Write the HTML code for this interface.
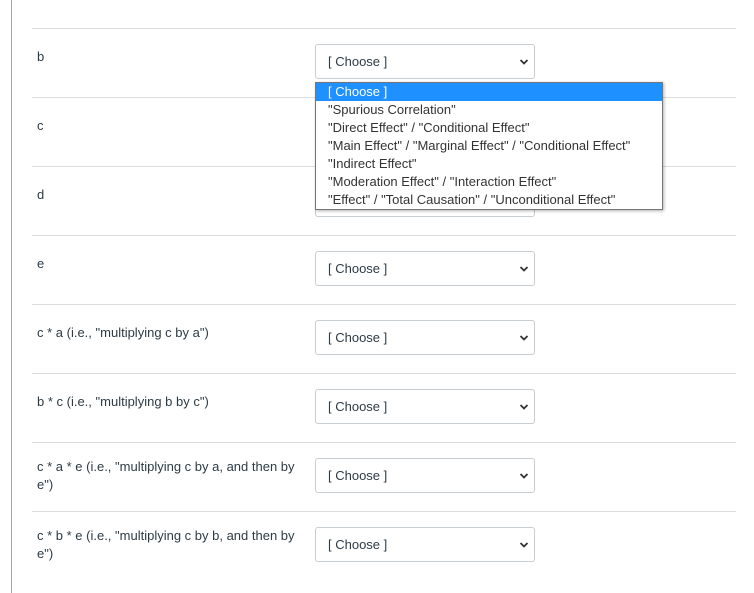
<!DOCTYPE html>
<html><head><style>
body{margin:0;width:754px;height:593px;background:#fff;position:relative;overflow:hidden;font-family:"Liberation Sans",sans-serif;color:#2d3b45}
.vl{position:absolute;left:11px;top:0;width:1px;height:593px;background:#a5a5a5}
.sep{position:absolute;left:32px;width:704px;height:1px;background:#dcdcdc}
.lab{position:absolute;left:37px;font-size:13px;line-height:18px;white-space:nowrap;top:0}
.sel{position:absolute;left:315px;width:220px;height:35px;border:1px solid #c7cdd1;border-radius:3px;box-sizing:border-box;background:#fff;font-size:13px;color:#2d3b45}
.sel span{position:absolute;left:12px;top:9px}
.sel svg{position:absolute;right:5px;top:13px}
.dd{position:absolute;left:315px;top:82px;width:348px;height:128px;border:1px solid #767676;box-sizing:border-box;background:#fff;box-shadow:1px 1px 3px rgba(0,0,0,.3);font-size:13px;color:#333}
.dd div{height:18px;line-height:18px;padding-left:12px;white-space:nowrap}
.dd .h{background:#1e90ff;color:#fff}
</style></head><body>
<div class="vl"></div>
<div class="sep" style="top:28px"></div>
<div class="sep" style="top:97px"></div>
<div class="sep" style="top:166px"></div>
<div class="sep" style="top:235px"></div>
<div class="sep" style="top:304px"></div>
<div class="sep" style="top:373px"></div>
<div class="sep" style="top:442px"></div>
<div class="sep" style="top:511px"></div>

<div class="lab" style="top:48px">b</div>
<div class="lab" style="top:117px">c</div>
<div class="lab" style="top:186px">d</div>
<div class="lab" style="top:255px">e</div>
<div class="lab" style="top:324px">c * a (i.e., "multiplying c by a")</div>
<div class="lab" style="top:393px">b * c (i.e., "multiplying b by c")</div>
<div class="lab" style="top:458px">c * a * e (i.e., "multiplying c by a, and then by<br>e")</div>
<div class="lab" style="top:527px">c * b * e (i.e., "multiplying c by b, and then by<br>e")</div>

<div class="sel" style="top:44px"><span>[ Choose ]</span><svg width="10" height="8" viewBox="0 0 10 8"><path d="M1.5 2 L5 5.5 L8.5 2" stroke="#333" stroke-width="1.8" fill="none"/></svg></div>
<div class="sel" style="top:182px"><span>[ Choose ]</span></div>
<div class="sel" style="top:251px"><span>[ Choose ]</span><svg width="10" height="8" viewBox="0 0 10 8"><path d="M1.5 2 L5 5.5 L8.5 2" stroke="#333" stroke-width="1.8" fill="none"/></svg></div>
<div class="sel" style="top:320px"><span>[ Choose ]</span><svg width="10" height="8" viewBox="0 0 10 8"><path d="M1.5 2 L5 5.5 L8.5 2" stroke="#333" stroke-width="1.8" fill="none"/></svg></div>
<div class="sel" style="top:389px"><span>[ Choose ]</span><svg width="10" height="8" viewBox="0 0 10 8"><path d="M1.5 2 L5 5.5 L8.5 2" stroke="#333" stroke-width="1.8" fill="none"/></svg></div>
<div class="sel" style="top:458px"><span>[ Choose ]</span><svg width="10" height="8" viewBox="0 0 10 8"><path d="M1.5 2 L5 5.5 L8.5 2" stroke="#333" stroke-width="1.8" fill="none"/></svg></div>
<div class="sel" style="top:527px"><span>[ Choose ]</span><svg width="10" height="8" viewBox="0 0 10 8"><path d="M1.5 2 L5 5.5 L8.5 2" stroke="#333" stroke-width="1.8" fill="none"/></svg></div>

<div class="dd">
<div class="h">[ Choose ]</div>
<div>"Spurious Correlation"</div>
<div>"Direct Effect" / "Conditional Effect"</div>
<div>"Main Effect" / "Marginal Effect" / "Conditional Effect"</div>
<div>"Indirect Effect"</div>
<div>"Moderation Effect" / "Interaction Effect"</div>
<div>"Effect" / "Total Causation" / "Unconditional Effect"</div>
</div>
</body></html>
